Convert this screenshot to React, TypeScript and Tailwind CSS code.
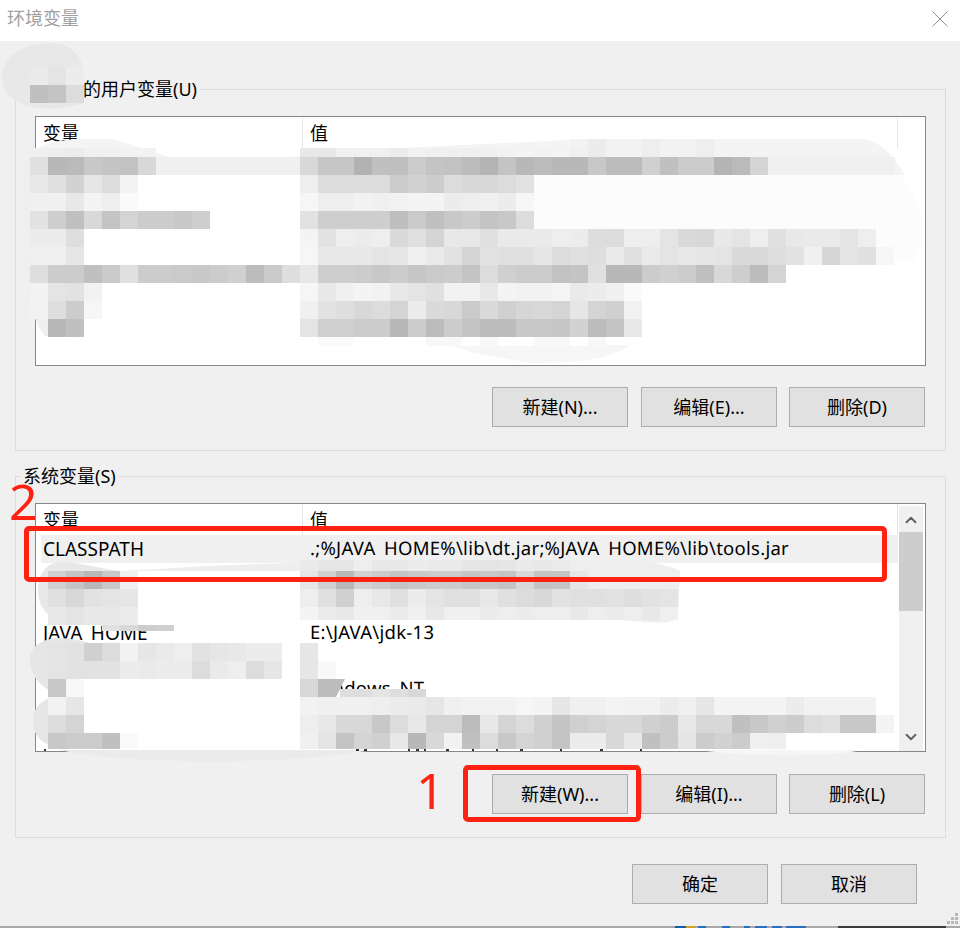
import React from 'react';
import { ChevronUp, ChevronDown } from 'lucide-react';

const FONT = 'font-["Noto_Sans","Noto_Sans_CJK_SC",sans-serif]';

// mosaic blocks: [y, height, x, grey values]
type Block = [number, number, number, string];

const BLOCKS: Block[] = [
  // name next to the first legend
  [67, 18, 30, 'ea e4 ec'],
  [85, 18, 30, 'c0 c4 dc'],
  // user variables, left column
  [148, 9, 30, 'f0 ee ec f0 f0 f2 f2'],
  [157, 18, 30, 'e0 b8 ba c8 c4 c2 d8'],
  [175, 18, 30, 'e8 e0 d2 e6 dc f4'],
  [193, 18, 30, 'f0 f0 e8 f4 ee fa'],
  [211, 18, 30, 'e2 ce c0 d8 c4 d4 cc cc c8 ce'],
  [229, 18, 30, 'ec ec de'],
  [247, 18, 30, 'f0 f0 e6'],
  [265, 18, 30, 'de cc cc c0 ca e0 cc cc ca c8 cc d0 bc ca de e4'],
  [283, 18, 30, 'f2 e4 e2 f2'],
  [301, 18, 30, 'f2 de cc f6'],
  [319, 18, 48, 'b8 c0'],
  // user variables, value column
  [139, 9, 570, 'f2 ec f2 f2 ee f2 f2 ee f4'],
  [148, 9, 300, 'e8 e8 f0 f0 f0 ec f2 f0 f0 f0 f0 f2 f4 f2 f4 f0 ec f2 f2 ee f2 f2 ee f4'],
  [157, 18, 300, 'd8 c6 c6 b2 c0 c0 cc c4 c2 bc b4 c4 b8 bc b8 b8 c8 bc bc d0 c0 cc cc b4 ba d4'],
  [175, 18, 300, 'ee dc dc dc dc cc d2 cc dc d8 d8 dc e2'],
  [193, 18, 300, 'f6 ee ee f2 f0 f2 f4 f4 ec ee f0 ec f6'],
  [211, 18, 300, 'e2 ce ce ce ce be ca c0 c8 cc c4 c8 dc'],
  [229, 18, 300, 'f4 e2 ee ec ee da e0 d4 e8 e8 e0 ea ea ea ee ec dd dc ee ee e4 da d8 e8 e4 ee e0 e8 ea ea e4 ee'],
  [247, 18, 300, 'f6 e8 e8 e8 e4 e6 f0 ea e2 d4 e2 e0 e0 e6 dc e0 de ea e0 ea e4 e8 e6 e4 da da de e2 f0 d6 e4 e0 f6'],
  [265, 18, 300, 'e8 ce ce cc c8 cc c6 ca cc c4 dc d0 cc cc c2 c4 e0 b8 b8 cc d0 cc c0 d8 ce bc d4'],
  [283, 18, 300, 'f6 e8 f0 f4 f2 e8 e4 e0 f2 f2 e8 f4 f2 f2 f5 ea ec f0 fa'],
  [301, 18, 300, 'f0 e2 de d8 dc d4 ec da d8 ca da d0 d6 d8 d4 e6 d4 d0 f2'],
  [319, 18, 300, 'e4 d0 d0 cc cc b8 cc bc cc c4 bc bc c8 c8 c6 d2 bc c4 e8'],
  [337, 9, 318, 'fa fa ff ff ff ff f8 f8 ff f8 ff ff f8 f8 ff f8'],
  // system variables, left column
  [571, 18, 48, 'd0 c4 b8 c8 f0'],
  [589, 18, 48, 'e0 d8 e2 e4 e6'],
  [607, 18, 48, 'e8 e4 e8 e8 ec'],
  [625, 6, 102, 'e0 d8 cc d0'],
  [643, 18, 48, 'e4 e2 d0 dc f2 e6 ea ee e2 e6 e8 ec ec'],
  [661, 18, 48, 'e4 e2 e2 e2 ec ea ec ec dc ea ee dc e6'],
  [679, 18, 48, 'c8 f8'],
  [697, 18, 48, 'f2 e6'],
  [715, 18, 48, 'dc d4'],
  [733, 16, 48, 'c8 cc cc c0 fa'],
  // system variables, value column
  [560, 11, 300, 'ea e6 e6 ee e8 e8 ec ea ea e6 e4 e6 ea e8 ec'],
  [571, 18, 300, 'e6 d0 b8 d2 cc c4 c8 cc cc c6 c8 c4 d8 c4 c4 e6'],
  [589, 18, 300, 'ee e0 d0 ee e8 e0 ec e4 e0 e0 e8 e0 dc d8 e2 e0 e0 e2 de e2 e4'],
  [607, 13, 300, 'f4 ec e8 f0 f0 ec f0 e8 f0 f0 ec ee ec ee ee e8 ee ec ee e8 f0'],
  [643, 36, 300, 'e6'],
  [661, 18, 318, 'f8'],
  [679, 18, 300, 'd8'],
  [690, 7, 372, 'e4 de d8'],
  [697, 18, 300, 'f2 f0 f0 f0 ee ec ea e6 f0 f2 f2 f2 f6 f4 e6 f0 f0 f4 f2 f2 ec f0 e6 f4 f4 f4 f4 ec f2 f2 f2 f2'],
  [715, 18, 300, 'ee e8 d8 d8 c8 dc e8 d4 d4 bc e8 d4 dc d0 c4 d0 d4 d8 d8 d0 cc e8 d8 d8 c0 c8 d0 cc dc e0 c8 c8 f4'],
  [733, 16, 300, 'f0 e4 c4 d4 d0 e8 b8 d8 f2 c0 dc c8 d4 d0 c4 ec ec d8 e8 c0 cc e4 cc d2 cc f0 ee'],
];

const Mosaic: React.FC = () => (
  <svg className="absolute left-0 top-0 pointer-events-none" width="960" height="928" viewBox="0 0 960 928">
    {/* smudges left by the brush */}
    <path d="M2 78C2 55 25 43 50 43C68 43 84 52 84 80L84 103C66 110 30 112 15 100C6 94 2 88 2 78Z" fill="#e8e8e8" />
    <path d="M290 175L895 175C905 175 915 190 923 225C923 245 918 255 912 262L532 262L532 175Z" fill="#fcfcfc" />
    <path d="M30 156C35 145 60 139 84 139L113 139L170 157L290 157L400 148L590 139L860 139C880 140 893 155 905 175L84 175L84 157L30 157Z" fill="#f4f4f4" />
    <path d="M156 157H895V175H156Z" fill="#f0f0f0" />
    <path d="M20 165C28 200 15 300 45 336L84 337L84 157L30 157Z" fill="#efefef" />
    <path d="M450 345L630 345C610 362 560 363 530 363L470 352Z" fill="#f6f6f6" />
    <path d="M38 590C38 572 48 562 62 562C80 562 95 568 120 571L138 571L138 625L80 622C50 622 38 610 38 590Z" fill="#e8e8e8" />
    <path d="M120 571C180 568 240 563 320 563L600 560C640 560 665 563 680 571L678 618C670 625 650 622 620 620L300 620L300 571Z" fill="#eeeeee" />
    <path d="M30 660C30 645 45 638 60 638C85 638 110 653 160 653C210 653 240 650 282 645L282 679L84 679L84 697L66 697C40 690 30 675 30 660Z" fill="#e6e6e6" />
    <path d="M33 722C33 708 40 698 60 697L84 697L84 749L60 749C42 745 33 735 33 722Z" fill="#e6e6e6" />
    <path d="M60 750L370 750C300 765 120 765 60 750Z" fill="#ebebeb" />
    <path d="M318 679L345 679L336 697L318 697Z" fill="#bcbcbc" />
    <path d="M340 689H372V697H340Z" fill="#dedede" />
    <path d="M372 689H426V691H372Z" fill="#dcdcdc" />
    <path d="M700 750L860 750C840 757 740 757 700 750Z" fill="#f6f6f6" />
    {BLOCKS.map(([y, h, x, greys], r) =>
      greys.split(' ').map((g, i) => (
        <rect key={`${r}-${i}`} x={x + i * 18} y={y} width="18" height={h} fill={`#${g}${g}${g}`} />
      ))
    )}
    {/* bottom edge of the row that is cut off */}
    <path d="M44 749h2v2h-2zM356 749h3v2h-3zM364 749h3v2h-3zM408 749h2v2h-2zM416 749h3v2h-3zM424 749h2v2h-2zM446 749h3v2h-3zM472 749h2v2h-2zM496 749h2v2h-2zM520 749h3v2h-3zM560 749h2v2h-2zM600 749h3v2h-3zM640 749h2v2h-2z" fill="#333333" />
    {/* resize grip */}
    <path d="M955 913h3v3h-3zM951 917h3v3h-3zM955 917h3v3h-3zM947 921h3v3h-3zM951 921h3v3h-3zM955 921h3v3h-3z" fill="#b8b8b8" />
    {/* window behind the dialog */}
    <rect x="0" y="926" width="960" height="2" fill="#a8a8a8" />
    <rect x="675" y="926" width="11" height="2" fill="#0f5fb0" />
    <rect x="686" y="926" width="10" height="2" fill="#d4a028" />
    <path d="M698 926h8v2h-8zM722 926h8v2h-8zM744 926h6v2h-6zM755 926h12v2h-12zM772 926h10v2h-10zM786 926h20v2h-20z" fill="#2a70c0" />
    <rect x="838" y="926" width="108" height="2" fill="#3c3c3c" />
  </svg>
);

const DialogButton: React.FC<{ label: string; className?: string }> = ({ label, className = '' }) => (
  <button className={`w-[136px] h-[40px] bg-[#e1e1e1] border-[1.5px] border-[#adadad] text-[18px] text-black ${className}`}>
    {label}
  </button>
);

const ListHeader: React.FC = () => (
  <div className="flex h-[31px] shrink-0 text-[18px] leading-[33px] text-black">
    <div className="w-[267px] pl-[7px] border-r border-[#e5e5e5]">变量</div>
    <div className="w-[595px] pl-[7px] border-r border-[#e5e5e5]">值</div>
  </div>
);

const Row: React.FC<{ name?: React.ReactNode; value?: React.ReactNode; selected?: boolean }> = ({ name, value, selected }) => (
  <div className={`flex h-[28px] shrink-0 ml-[5px] w-[857px] text-[19px] leading-[28px] text-black whitespace-nowrap ${selected ? 'bg-[#f0f0f0]' : ''}`}>
    <div className="w-[262px] pl-[2px]">{name}</div>
    <div className="pl-[7px] text-[18.5px] tracking-[0.27px] [text-rendering:geometricPrecision]">{value}</div>
  </div>
);

const Gap = () => <span className="text-transparent">_</span>;

export default function App() {
  return (
    <div className={`relative w-[960px] h-[928px] overflow-hidden bg-[#f0f0f0] ${FONT}`}>
      <div className="flex items-center justify-between h-[41px] bg-white pl-[7px] pr-[12px] pb-[4px]">
        <span className="text-[18px] text-[#a0a0a0]">环境变量</span>
        <svg width="16" height="16" viewBox="0 0 16 16" stroke="#8c8c8c" strokeWidth="1">
          <path d="M0.5 0.5L15.5 15.5M15.5 0.5L0.5 15.5" />
        </svg>
      </div>

      <div className="px-[15px]">
        <section className="relative mt-[48px] w-[931px] h-[362px] border-[1.5px] border-[#dcdcdc] pl-[19px] pt-[26px]">
          <span className="absolute left-[67px] -top-[14px] bg-[#f0f0f0] pr-[3px] text-[18px] leading-[26px] text-black">的用户变量(U)</span>
          <div className="flex flex-col w-[891px] h-[250px] border-[1.5px] border-[#828790] bg-white overflow-hidden">
            <ListHeader />
          </div>
          <div className="flex mt-[21px] ml-[457px]">
            <DialogButton label="新建(N)..." className="mr-[13px]" />
            <DialogButton label="编辑(E)..." className="mr-[12px]" />
            <DialogButton label="删除(D)" />
          </div>
        </section>

        <section className="relative mt-[25px] w-[931px] h-[362px] border-[1.5px] border-[#dcdcdc] pl-[19px] pt-[26px]">
          <span className="absolute left-[4px] -top-[14px] bg-[#f0f0f0] px-[3px] text-[18px] leading-[26px] text-black">系统变量(S)</span>
          <div className="relative w-[891px] h-[249px] border-[1.5px] border-[#828790] bg-white overflow-hidden">
            <div className="flex flex-col">
              <ListHeader />
              <Row selected name="CLASSPATH" value={<>.;%JAVA<Gap />HOME%\lib\dt.jar;%JAVA<Gap />HOME%\lib\tools.jar</>} />
              <Row />
              <Row />
              <Row name={<>JAVA<Gap />HOME</>} value="E:\JAVA\jdk-13" />
              <Row />
              <Row value={<>Windows<Gap />NT</>} />
            </div>
            <div className="absolute right-[2.5px] top-[1.5px] bottom-[0.5px] w-[24px] flex flex-col items-center justify-between bg-[#f0f0f0] py-[5px]">
              <ChevronUp size={18} strokeWidth={2.5} className="text-[#606060]" />
              <ChevronDown size={18} strokeWidth={2.5} className="text-[#606060]" />
              <div className="absolute left-0 top-[26px] w-[24px] h-[79px] bg-[#cdcdcd]" />
            </div>
          </div>
          <div className="flex mt-[22px] ml-[457px]">
            <DialogButton label="新建(W)..." className="mr-[13px]" />
            <DialogButton label="编辑(I)..." className="mr-[12px]" />
            <DialogButton label="删除(L)" />
          </div>
        </section>
      </div>

      <div className="flex justify-end gap-[13px] mt-[26px] pr-[43px]">
        <DialogButton label="确定" />
        <DialogButton label="取消" />
      </div>

      <Mosaic />

      {/* red annotations */}
      <div className="absolute left-[24px] top-[526px] w-[863px] h-[56px] border-[5px] border-[#ff2212] rounded-[5px]" />
      <div className="absolute left-[463px] top-[765px] w-[178px] h-[57px] border-[5px] border-[#ff2212] rounded-[5px]" />
      <span className="absolute left-[9px] top-[467px] text-[50px] leading-[68px] text-[#ff2212]">2</span>
      <span className="absolute left-[416px] top-[756px] text-[50px] leading-[68px] text-[#ff2212]">1</span>
    </div>
  );
}
